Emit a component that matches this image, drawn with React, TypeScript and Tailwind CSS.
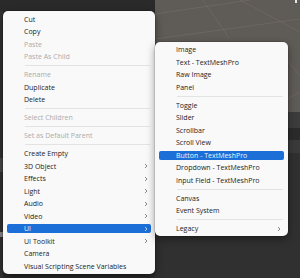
import React from "react";

type Item =
  | { kind: "sep" }
  | { kind: "item"; label: string; disabled?: boolean; sub?: boolean; active?: boolean };

const mainItems: Item[] = [
  { kind: "item", label: "Cut" },
  { kind: "item", label: "Copy" },
  { kind: "item", label: "Paste", disabled: true },
  { kind: "item", label: "Paste As Child", disabled: true },
  { kind: "sep" },
  { kind: "item", label: "Rename", disabled: true },
  { kind: "item", label: "Duplicate" },
  { kind: "item", label: "Delete" },
  { kind: "sep" },
  { kind: "item", label: "Select Children", disabled: true },
  { kind: "sep" },
  { kind: "item", label: "Set as Default Parent", disabled: true },
  { kind: "sep" },
  { kind: "item", label: "Create Empty" },
  { kind: "item", label: "3D Object", sub: true },
  { kind: "item", label: "Effects", sub: true },
  { kind: "item", label: "Light", sub: true },
  { kind: "item", label: "Audio", sub: true },
  { kind: "item", label: "Video", sub: true },
  { kind: "item", label: "UI", sub: true, active: true },
  { kind: "item", label: "UI Toolkit", sub: true },
  { kind: "item", label: "Camera" },
  { kind: "item", label: "Visual Scripting Scene Variables" },
];

const subItems: Item[] = [
  { kind: "item", label: "Image" },
  { kind: "item", label: "Text - TextMeshPro" },
  { kind: "item", label: "Raw Image" },
  { kind: "item", label: "Panel" },
  { kind: "sep" },
  { kind: "item", label: "Toggle" },
  { kind: "item", label: "Slider" },
  { kind: "item", label: "Scrollbar" },
  { kind: "item", label: "Scroll View" },
  { kind: "item", label: "Button - TextMeshPro", active: true },
  { kind: "item", label: "Dropdown - TextMeshPro" },
  { kind: "item", label: "Input Field - TextMeshPro" },
  { kind: "sep" },
  { kind: "item", label: "Canvas" },
  { kind: "item", label: "Event System" },
  { kind: "sep" },
  { kind: "item", label: "Legacy", sub: true },
];

function Chevron({ light }: { light?: boolean }) {
  return (
    <svg width="4" height="6" viewBox="0 0 4 6" className="shrink-0">
      <polyline
        points="1,1 3,3 1,5"
        fill="none"
        stroke={light ? "#dbe8fb" : "#6b6b6b"}
        strokeWidth="0.8"
      />
    </svg>
  );
}

function Menu({ items }: { items: Item[] }) {
  return (
    <div className="flex flex-col pt-[2px] pb-[1px]">
      {items.map((it, i) =>
        it.kind === "sep" ? (
          <div key={i} className="h-[5.5px] flex items-center pl-[22px] pr-[5px]">
            <div className="h-px flex-1 bg-[#e3e3e3]" />
          </div>
        ) : (
          <div key={i} className="h-[12.5px] px-[4px] flex items-center">
            <div
              className={
                "flex-1 h-[9px] rounded-[2px] flex items-center pl-[17px] pr-[3px] " +
                (it.active ? "bg-[#1b6fd6]" : "")
              }
            >
              <span
                className={
                  "flex-1 whitespace-nowrap leading-none text-[7px] " +
                  (it.active
                    ? "text-[#eaf2fd]"
                    : it.disabled
                    ? "text-[#ababab]"
                    : "text-[#1c1c1c]")
                }
              >
                {it.label}
              </span>
              {it.sub && <Chevron light={it.active} />}
            </div>
          </div>
        )
      )}
    </div>
  );
}

export default function App() {
  return (
    <div
      className="relative w-[300px] h-[278px] overflow-hidden bg-[#2f2f2f]"
      style={{ fontFamily: '"Open Sans", "Noto Sans", sans-serif' }}
    >
      {/* background editor panels */}
      <div className="flex h-full">
        <div className="w-[155px] flex flex-col bg-[#2b2b2b]">
          <div className="h-[11px] bg-[#2a2a2a]" />
          <div className="flex-1 flex">
            <div className="w-[3px] flex flex-col bg-[#333333]">
              <div className="h-[147px]" />
              <div className="h-[14px] bg-[#4a4a4a]" />
              <div className="h-[60px]" />
              <div className="h-[5px] bg-[#8a8a8a]" />
              <div className="flex-1" />
            </div>
            <div className="flex-1" />
          </div>
        </div>
        <div className="flex-1 flex flex-col">
          <div className="h-[112px] relative bg-[#5f5b56]">
            <svg width="145" height="112" viewBox="0 0 145 112" className="block">
              <g stroke="#716c66" strokeWidth="0.7" fill="none">
                <line x1="0" y1="14" x2="95" y2="0" />
                <line x1="0" y1="39" x2="145" y2="19" />
                <line x1="48" y1="0" x2="74" y2="38" />
                <line x1="85" y1="0" x2="145" y2="32" />
                <line x1="128" y1="55" x2="145" y2="76" />
                <line x1="130" y1="100" x2="145" y2="92" />
              </g>
              <rect x="140" y="0" width="2" height="3" fill="#e8e8e8" />
            </svg>
          </div>
          <div className="h-[16px] bg-[#3c3c3c]" />
          <div className="h-[12px] bg-[#2b2b2b]" />
          <div className="h-[13px] bg-[#3a3a3a]" />
          <div className="flex-1 bg-[#303030]" />
        </div>
      </div>

      {/* main context menu */}
      <div className="absolute left-[3px] top-[11px] w-[152px] rounded-[5px] bg-[#f9f9f9] shadow-[0_0_0_0.5px_rgba(0,0,0,0.25),0_3px_8px_rgba(0,0,0,0.45)]">
        <Menu items={mainItems} />
      </div>

      {/* UI submenu */}
      <div className="absolute left-[155px] top-[41.5px] w-[133px] rounded-[5px] bg-[#f9f9f9] shadow-[0_0_0_0.5px_rgba(0,0,0,0.2),0_3px_8px_rgba(0,0,0,0.4)]">
        <Menu items={subItems} />
      </div>
    </div>
  );
}
